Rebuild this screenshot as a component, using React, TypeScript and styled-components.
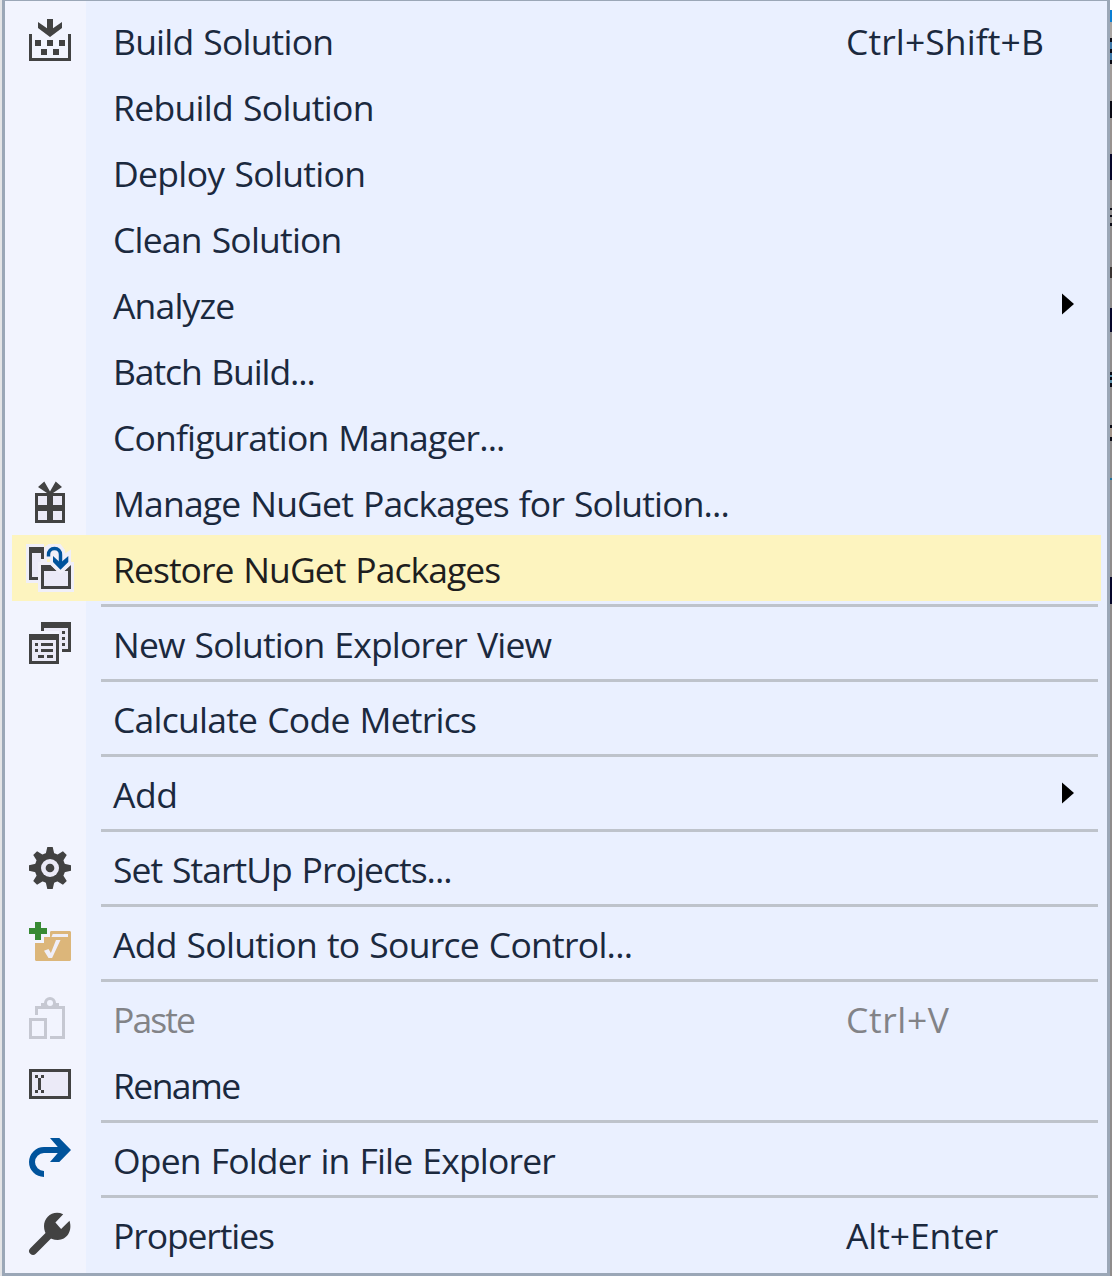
import React from 'react';
import styled, { createGlobalStyle } from 'styled-components';

const Global = createGlobalStyle`
  * { box-sizing: border-box; }
  html, body { margin: 0; background: #8f8c8b; overflow: hidden; }
`;

const Screen = styled.div`
  display: flex;
  width: 1112px;
  height: 1276px;
  font-family: 'Open Sans', 'Noto Sans', sans-serif;
`;

const LeftEdge = styled.div`
  width: 2px;
  background: #e4e4e6;
`;

const RightEdge = styled.div`
  display: flex;
  flex-direction: column;
  width: 2px;
  background: #8f8c8b;
`;

const Sliver = styled.span<{ $h: number; $c: string }>`
  flex: none;
  height: ${(p) => p.$h}px;
  background: ${(p) => p.$c};
`;

const MenuPanel = styled.div`
  width: 1108px;
  height: 1276px;
  padding: 6px 6px 6px 7px;
  border: 3px solid #9ba7b7;
  border-top-width: 1px;
  background: linear-gradient(90deg, #f2f4fe 81px, #eaf0ff 81px);
`;

const Row = styled.div<{ $active?: boolean; $disabled?: boolean }>`
  display: grid;
  grid-template-columns: 87px 733px 216px 12px;
  align-items: center;
  height: 66px;
  padding-left: 14px;
  font-size: 35.5px;
  line-height: 64px;
  word-spacing: 1.5px;
  white-space: nowrap;
  color: ${(p) => (p.$disabled ? '#828387' : p.$active ? '#1e1e1e' : '#1b293e')};
  background: ${(p) => (p.$active ? '#fdf4bf' : 'transparent')};
`;

const IconCell = styled.div`
  display: flex;
`;

const Glyph = styled.svg`
  width: 48px;
  height: 48px;
  overflow: visible;
`;

const Label = styled.span<{ $ls?: number }>`
  padding-top: 2px;
  letter-spacing: ${(p) => p.$ls ?? 0}px;
`;

const Arrow = styled.svg`
  width: 12px;
  height: 22px;
`;

const Separator = styled.div`
  height: 3px;
  margin: 3px 3px 3px 89px;
  background: #bec3cb;
`;

const D = '#424242';
const L = '#ebeaf7';
const B = '#00539c';

const icons: Record<string, React.ReactNode> = {
  build: (
    <>
      <path fill={D} d="M1 6h1v8h12V6h1v9H1zM3 8h2v2H3zM7 8h2v2H7zM11 8h2v2h-2zM5 11h2v2H5zM9 11h2v2H9z" />
      <path fill={D} d="M4 2 7 4.1V1h2v3.1L12 2v2L8 7 4 4z" />
    </>
  ),
  gift: (
    <>
      <path fill={L} d="M3.5 5.5h9v9h-9z" />
      <path fill={D} fillRule="evenodd" d="M3 5h10v10H3zM4 6v3h3V6zM9 6v3h3V6zM4 11v3h3v-3zM9 11v3h3v-3z" />
      <path fill={D} d="M4 3 6.1 1.2 8 4.5 9.9 1.2 12 3 9 5H7z" />
    </>
  ),
  restore: (
    <>
      <path fill="#f0eff8" d="M0 0H6V1.2L7.5 0H11.5L13 2V3.2L15 1.8V6H16V16H4V13H0z" />
      <path fill="#fdf4bf" d="M7 5h1v1H7z" />
      <path fill={D} fillRule="evenodd" d="M1 1h5v4H5V3H2v8h2v1H1z" />
      <path fill={L} d="M2 3h3v3H4v5H2zM6 9h8v5H6z" />
      <path fill={D} fillRule="evenodd" d="M5 7h3.2l2 2h2.6l2-2H15v8H5zM6 9v5h8V9z" />
      <path fill="#f0eff8" d="M8 6h7v1l-3.5 3L8.2 7z" />
      <path fill="none" stroke={B} strokeWidth="1.15" d="M7.5 4.2V3.6C7.5 2.3 8.3 1.5 9.5 1.5s2 .8 2 2.1V7" />
      <path fill={B} d="M9 4 11 5.8h1L14.1 4v2l-2.6 2.6L9 6z" />
    </>
  ),
  windows: (
    <>
      <path fill={L} d="M6 3h8v7h-3V4H6zM2 7h8v7H2z" />
      <path fill={D} d="M5 1h10v10h-3v-1h2V3H6v1H5zM12 4h1v1h-1zM12 6h1v1h-1zM12 8h1v1h-1z" />
      <path fill={D} fillRule="evenodd" d="M1 5h10v10H1zM2 7v7h8V7z" />
      <path fill={D} d="M3 8h1v1H3zM5 8h4v1H5zM3 10h1v1H3zM5 10h4v1H5zM4 12h2v1H4zM7 12h2v1H7z" />
    </>
  ),
  gear: (
    <>
      <g fill={D}>
        <circle cx="8" cy="8" r="5.1" />
        {[0, 45, 90, 135, 180, 225, 270, 315].map((a) => (
          <path key={a} transform={`rotate(${a} 8 8)`} d="M7.1 1h1.8l.5 2.2.9.8v1H5.7V4l.9-.8z" />
        ))}
      </g>
      <circle cx="8" cy="8" r="3" fill={L} />
      <circle cx="8" cy="8" r="1.45" fill={D} />
    </>
  ),
  source: (
    <>
      <path fill="#dcb67a" d="M3 8h3V6h2V4.3L8.3 4h6.4l.3.3v9.4l-.3.3H3.3L3 13.7z" />
      <path fill="#f0eff8" d="M8.9 5H14v1H8.5z" />
      <path fill="#f0eff8" d="M6 10.6 7.5 10l.8 1.3L10 7h1.5L8.7 13H7.5z" />
      <path fill="#388a34" d="M3 1h2v2h2v2H5v2H3V5H1V3h2z" />
    </>
  ),
  paste: (
    <g fill="#c6c8d2">
      <path d="M3 4h2V3h6v1h2v11H8v-1h4V5H4v2H3z" />
      <circle cx="8" cy="3" r="2" />
      <circle cx="8" cy="3" r="1" fill="#f2f4fe" />
      <path fillRule="evenodd" d="M1 8h6v7H1zM2 9v5h4V9z" />
    </g>
  ),
  rename: (
    <>
      <path fill={L} d="M2 4h12v8H2z" />
      <path fill={D} fillRule="evenodd" d="M1 3h14v10H1zM2 4v8h12V4z" />
      <path fill={D} d="M3 5h1v1H3zM5 5h1v1H5zM4 6h1v4H4zM3 10h1v1H3zM5 10h1v1H5z" />
    </>
  ),
  open: (
    <>
      <path fill="none" stroke={B} strokeWidth="2" d="M12 5H6a4 4 0 0 0 0 8" />
      <path fill={B} d="M8 1h3.1L15 5l-3.9 4H8l2.6-3V4z" />
    </>
  ),
  wrench: (
    <>
      <path stroke={D} strokeWidth="2.6" strokeLinecap="round" d="M2.35 13.65 8.5 7.5" />
      <path fill={D} d="M12.4 1.4 9.8 4.2l1.9 2.1 2.8-2.7C15.6 7 13.6 10 10.6 10 7.8 10 6 8 6 5.4 6 2.4 9-.1 12.4 1.4z" />
    </>
  ),
};

type Entry = {
  label: string;
  icon?: string;
  keys?: string;
  sub?: boolean;
  active?: boolean;
  disabled?: boolean;
  sep?: boolean;
  ls?: number;
  kls?: number;
};

const entries: Entry[] = [
  { label: 'Build Solution', icon: 'build', keys: 'Ctrl+Shift+B', ls: -0.8, kls: 0.1 },
  { label: 'Rebuild Solution', ls: -0.7 },
  { label: 'Deploy Solution', ls: -0.68 },
  { label: 'Clean Solution', ls: -0.8 },
  { label: 'Analyze', sub: true, ls: -0.83 },
  { label: 'Batch Build...', ls: -1.1 },
  { label: 'Configuration Manager...', ls: -0.85 },
  { label: 'Manage NuGet Packages for Solution...', icon: 'gift', ls: -0.83 },
  { label: 'Restore NuGet Packages', icon: 'restore', active: true, sep: true, ls: -0.95 },
  { label: 'New Solution Explorer View', icon: 'windows', sep: true, ls: -0.82 },
  { label: 'Calculate Code Metrics', sep: true, ls: -0.76 },
  { label: 'Add', sub: true, sep: true, ls: -0.5 },
  { label: 'Set StartUp Projects...', icon: 'gear', sep: true, ls: -0.96 },
  { label: 'Add Solution to Source Control...', icon: 'source', sep: true, ls: -0.75 },
  { label: 'Paste', icon: 'paste', keys: 'Ctrl+V', disabled: true, ls: -1.9, kls: 0.6 },
  { label: 'Rename', icon: 'rename', sep: true, ls: -1.6 },
  { label: 'Open Folder in File Explorer', icon: 'open', sep: true, ls: -0.82 },
  { label: 'Properties', icon: 'wrench', keys: 'Alt+Enter', ls: -1.1, kls: -0.1 },
];

const K = '#0a0a14';
const G = '#8f8c8b';
const slivers: [number, string][] = [
  [10, '#ffffff'], [12, '#0a7fd4'], [16, '#a9a5a2'], [4, K], [7, '#3f78a8'], [4, K], [7, '#3f78a8'], [4, K],
  [37, '#a19c99'], [17, K], [36, '#98928f'], [26, '#06062a'], [28, G], [2, K], [5, G], [2, K], [6, G], [3, K],
  [41, G], [11, '#3a3330'], [30, G], [24, '#06062a'], [40, G], [3, K], [2, '#5b8ea8'], [3, K], [3, '#5b8ea8'], [4, K],
  [38, G], [3, K], [9, '#a3958a'], [4, K], [37, G], [2, '#22739c'], [97, G], [27, '#06062a'],
];

export default function App() {
  return (
    <Screen>
      <Global />
      <LeftEdge />
      <MenuPanel>
        {entries.map((e) => (
          <React.Fragment key={e.label}>
            <Row $active={e.active} $disabled={e.disabled}>
              <IconCell>{e.icon && <Glyph viewBox="0 0 16 16">{icons[e.icon]}</Glyph>}</IconCell>
              <Label $ls={e.ls}>{e.label}</Label>
              <Label $ls={e.kls}>{e.keys}</Label>
              {e.sub && (
                <Arrow viewBox="0 0 12 22">
                  <path d="M0 .5 12 11 0 21.5z" fill="#000" />
                </Arrow>
              )}
            </Row>
            {e.sep && <Separator />}
          </React.Fragment>
        ))}
      </MenuPanel>
      <RightEdge>
        {slivers.map(([h, c], i) => (
          <Sliver key={i} $h={h} $c={c} />
        ))}
      </RightEdge>
    </Screen>
  );
}
